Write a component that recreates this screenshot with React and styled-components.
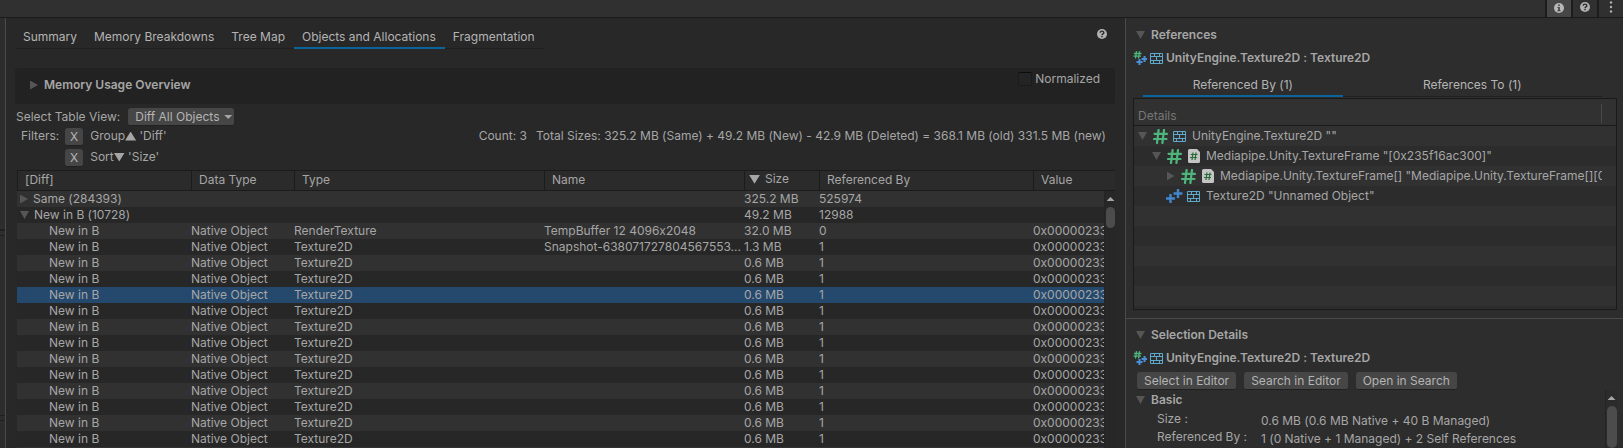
import React from "react";
import styled, { createGlobalStyle } from "styled-components";

const Global = createGlobalStyle`
  * { box-sizing: border-box; }
  body {
    margin: 0;
    background: #2d2d2d;
    color: #a6a6a6;
    font: 12px/16px Inter, "Liberation Sans", sans-serif;
    font-feature-settings: "calt" 0;
  }
  button, select, input { font: inherit; color: inherit; margin: 0; }
  h2, h3, p, dl, dd, ul { margin: 0; padding: 0; font-size: inherit; }
`;

const Window = styled.div`
  display: flex;
  flex-direction: column;
  height: 100vh;
  overflow: hidden;
  white-space: nowrap;
`;

const Toolbar = styled.header`
  display: flex;
  justify-content: flex-end;
  flex: none;
  height: 18px;
  background: #303030;
  border-bottom: 1px solid #1a1a1a;
`;

const ToolButton = styled.button`
  display: flex;
  justify-content: center;
  width: 26px;
  padding: ${(p) => p.$top || 2}px 0 0;
  border: 0;
  border-left: 2px solid #1c1c1c;
  background: ${(p) => (p.$active ? "#464646" : "#303030")};
`;

const Panes = styled.div`
  display: flex;
  flex: 1;
  min-height: 0;
`;

const Rail = styled.aside`
  width: 6px;
  flex: none;
  padding-top: 211px;
  background: #2d2d2d;
  border-right: 1px solid #4a4a4a;
`;

const RailCard = styled.div`
  height: ${(p) => p.$height}px;
  border-top: 1px solid #1f1f1f;
  border-bottom: 1px solid #1f1f1f;
  margin-bottom: 4px;
`;

const Main = styled.main`
  flex: 1;
  min-width: 0;
  padding: 8px 10px 0 9px;
  background: #282828;
  overflow: hidden;
`;

const Side = styled.aside`
  display: flex;
  flex-direction: column;
  width: 498px;
  flex: none;
  border-left: 1px solid #4a4a4a;
  background: #2d2d2d;
`;

const TabBar = styled.div`
  display: flex;
  justify-content: space-between;
  align-items: flex-start;
  padding-right: 8px;
`;

const Tabs = styled.nav`
  display: flex;
`;

const Tab = styled.button`
  height: 23px;
  padding: 0 9px 2px 8px;
  border: 0;
  color: #b4b4b4;
  background: ${(p) =>
    p.$active
      ? "linear-gradient(#0a659c, #0a659c) 0 100% / 100% 2px no-repeat"
      : "linear-gradient(#202020, #202020) 0 100% / 100% 1px no-repeat"};
`;

const SideTab = styled(Tab)`
  flex: ${(p) => p.$grow};
  height: 24px;
  padding: 0;
`;

const IconButton = styled.button`
  display: flex;
  padding: 0;
  margin-top: 3px;
  border: 0;
  background: none;
`;

const Overview = styled.section`
  display: flex;
  justify-content: space-between;
  height: 36px;
  margin-top: 19px;
  padding: 0 15px;
  border-radius: 4px;
  background: #222;
`;

const Heading = styled.h2`
  display: flex;
  align-items: center;
  gap: 6px;
  height: ${(p) => p.$height || 16}px;
  font-weight: 600;
  line-height: 16px;
`;

const Check = styled.label`
  display: flex;
  align-items: center;
  gap: 3px;
  height: 22px;
`;

const CheckBox = styled.input`
  appearance: none;
  width: 14px;
  height: 14px;
  border: 1px solid #1b1b1b;
  border-top-color: #0d0d0d;
  border-radius: 2px;
  background: #242424;
`;

const Triangle = styled.span`
  flex: none;
  width: ${(p) => (p.$open ? 9 : 8)}px;
  height: ${(p) => (p.$open ? 8 : 9)}px;
  background: #565656;
  clip-path: ${(p) =>
    p.$open
      ? "polygon(0 0, 100% 0, 50% 100%)"
      : "polygon(0 0, 100% 50%, 0 100%)"};
`;

const ViewRow = styled.label`
  display: flex;
  align-items: center;
  gap: 8px;
  height: 18px;
  margin-top: 4px;
  padding-left: 1px;
`;

const SelectBox = styled.span`
  display: grid;
  align-items: center;
`;

const Select = styled.select`
  grid-area: 1 / 1;
  appearance: none;
  height: 18px;
  width: 106px;
  padding: 0 0 0 7px;
  border: 0;
  border-bottom: 1px solid #202020;
  border-radius: 3px;
  background: #464646;
  color: #b4b4b4;
  line-height: 16px;
`;

const SelectArrow = styled.span`
  grid-area: 1 / 1;
  justify-self: end;
  width: 8px;
  height: 4px;
  margin-right: 2px;
  background: #a6a6a6;
  clip-path: polygon(0 0, 100% 0, 50% 100%);
  pointer-events: none;
`;

const Filters = styled.div`
  display: flex;
  justify-content: space-between;
  height: 42px;
  margin-top: 2px;
  padding: 0 9px 0 6px;
`;

const FilterGrid = styled.div`
  display: grid;
  grid-template-columns: 44px auto;
  grid-auto-rows: 17px;
  row-gap: 4px;
`;

const FilterItem = styled.div`
  grid-column: 2;
  display: flex;
  align-items: flex-start;
  gap: 7px;
`;

const Order = styled.span`
  display: inline-flex;
  align-items: center;
`;

const FilterMark = styled.span`
  width: 11px;
  height: 9px;
  background: #a6a6a6;
  margin-right: ${(p) => (p.$sort ? 5 : 0)}px;
  clip-path: ${(p) =>
    p.$up ? "polygon(50% 0, 100% 100%, 0 100%)" : "polygon(0 0, 100% 0, 50% 100%)"};
`;

const Button = styled.button`
  height: 18px;
  padding: 0 ${(p) => (p.$small ? 5 : 7)}px;
  border: 0;
  border-bottom: 1px solid #202020;
  border-radius: 3px;
  background: #464646;
  color: #b4b4b4;
  line-height: 16px;
`;

const Totals = styled.p`
  display: flex;
  gap: 9px;
`;

const TableBox = styled.div`
  position: relative;
  margin-left: 2px;
`;

const Table = styled.table`
  width: 100%;
  table-layout: fixed;
  border-collapse: separate;
  border-spacing: 0;
`;

const Th = styled.th`
  height: 21px;
  padding: 0 0 2px ${(p) => (p.$sorted ? 4 : 7)}px;
  border: 1px solid #1b1b1b;
  border-right: 0;
  background: #2b2b2b;
  font-weight: 400;
  text-align: left;
  line-height: 16px;
`;

const Tr = styled.tr`
  height: 16px;
  background: ${(p) => (p.$selected ? "#24496d" : "#272727")};
  &:nth-child(odd) {
    background: ${(p) => (p.$selected ? "#24496d" : "#313131")};
  }
`;

const Td = styled.td`
  height: 16px;
  padding: 0 0 0 ${(p) => p.$indent || 0}px;
  overflow: hidden;
`;

const Toggle = styled.span`
  display: flex;
  align-items: center;
  gap: 5px;
`;

const ScrollBar = styled.div`
  display: flex;
  flex-direction: column;
  align-items: center;
  gap: 6px;
  flex: none;
  width: 12px;
  padding-top: 6px;
  border-left: 1px solid #242424;
  background: #2b2b2b;
`;

const TableScroll = styled(ScrollBar)`
  position: absolute;
  top: 21px;
  right: 0;
  bottom: 0;
  width: 11px;
  padding-left: 1px;
  background: #272727;
`;

const ScrollArrow = styled.span`
  flex: none;
  width: 8px;
  height: 4px;
  background: #a6a6a6;
  clip-path: polygon(50% 0, 100% 100%, 0 100%);
`;

const Thumb = styled.span`
  width: 10px;
  max-width: 100%;
  height: ${(p) => p.$height};
  border-radius: 5px;
  background: #4c4c4c;
`;

const References = styled.section`
  padding: 9px 6px 0 7px;
  height: 301px;
  flex: none;
  border-bottom: 1px solid #4a4a4a;
`;

const Details = styled.section`
  display: flex;
  flex-direction: column;
  flex: 1;
  min-height: 0;
  padding: 8px 6px 0 7px;
`;

const Titled = styled.div`
  padding-left: 3px;
`;

const ObjectName = styled.h3`
  display: flex;
  align-items: center;
  gap: 3px;
  height: 16px;
  margin-top: 7px;
  font-weight: 600;
`;

const SideTabs = styled(Tabs)`
  margin: 7px 15px 0 10px;
`;

const Tree = styled.div`
  height: 212px;
  margin-top: 1px;
  border: 1px solid #1a1a1a;
  overflow: hidden;
`;

const TreeHead = styled.div`
  display: flex;
  align-items: center;
  justify-content: space-between;
  height: 27px;
  padding: 8px 14px 0 4px;
  border-bottom: 1px solid #1a1a1a;
  background: #313131;
  color: #777;
`;

const ColumnGrip = styled.span`
  width: 1px;
  height: 19px;
  margin-top: -6px;
  background: #4a4a4a;
`;

const TreeBody = styled.ul`
  height: 100%;
  list-style: none;
  background: repeating-linear-gradient(#313131 0 20px, #2c2c2c 20px 40px);
`;

const TreeRow = styled.li`
  display: flex;
  align-items: center;
  height: 20px;
  margin-right: 14px;
  padding-left: ${(p) => 4 + 14 * p.$level}px;
  overflow: hidden;
`;

const TreeIcon = styled.span`
  display: flex;
  justify-content: center;
  flex: none;
  width: ${(p) => p.$width}px;
`;

const TreeText = styled.span`
  padding-left: 6px;
`;

const ButtonRow = styled.div`
  display: flex;
  gap: 8px;
  margin: 6px 0 0 4px;
`;

const Properties = styled.div`
  display: flex;
  flex: 1;
  min-height: 0;
  justify-content: space-between;
`;

const PropertyBody = styled.div`
  padding: 2px 0 0 3px;
  overflow: hidden;
`;

const PropertyList = styled.dl`
  display: grid;
  grid-template-columns: 104px auto;
  grid-auto-rows: 18px;
  margin: 3px 0 0 21px;
`;

const Value = styled.dd`
  padding-top: 2px;
`;

const HashIcon = () => (
  <svg width="15" height="15" viewBox="0 0 15 15" aria-hidden="true">
    <path d="M5.600 1 4 14M11 1 9.400 14M1.500 4.800h12.500M1 10h12.500" fill="none" stroke="#4eb57c" strokeWidth="2.200" strokeLinecap="round" />
  </svg>
);

const ScriptIcon = () => (
  <svg width="12" height="14" viewBox="0 0 12 14" aria-hidden="true">
    <path d="M1.500 0H9l3 3v9.500a1.500 1.500 0 0 1-1.500 1.500h-9A1.500 1.500 0 0 1 0 12.500v-11A1.500 1.500 0 0 1 1.500 0Z" fill="#c4c4c4" />
    <path d="M5 3.500 4 11M8 3.500 7 11M2.500 5.500h7M2 8.500h7" fill="none" stroke="#276b37" strokeWidth="1.200" />
  </svg>
);

const TextureIcon = () => (
  <svg width="13" height="11" viewBox="0 0 13 11" aria-hidden="true">
    <path d="M.5.5h12v10H.5zM.5 3.500h12M.5 7.500h12M4.500.5v3M9.500.5v3M3.500 7.500v3M9.500 7.500v3M6.500 3.500v4" fill="none" stroke="#5fa9cc" />
  </svg>
);

const NativeIcon = () => (
  <svg width="18" height="16" viewBox="0 0 18 16" aria-hidden="true">
    <path d="M13 1v9M8.500 5.500h9M5.500 6v9M1 10.500h9" fill="none" stroke="#4186cf" strokeWidth="2.400" />
  </svg>
);

const UnifiedIcon = () => (
  <svg width="14" height="14" viewBox="0 0 14 14" aria-hidden="true">
    <path d="M3.500.2 2.500 7.500M6.500.2 5.500 7.500M1 2.500h7.500M.5 5.200h7.500" fill="none" stroke="#4eb57c" strokeWidth="1.300" />
    <path d="M11.500 5v6M8.500 8h6M6.500 8v6M3.500 11h6" fill="none" stroke="#4a8fd8" strokeWidth="2" />
  </svg>
);

const InfoIcon = () => (
  <svg width="10" height="10" viewBox="0 0 10 10" aria-hidden="true">
    <circle cx="5" cy="5" r="5" fill="#b8b8b8" />
    <path d="M4.200 1.500h1.600V3H4.200zM3.500 4h2.300v3.200h.8v1H3.400v-1h.8V5h-.7z" fill="#404040" />
  </svg>
);

const HelpIcon = () => (
  <svg width="10" height="10" viewBox="0 0 10 10" aria-hidden="true">
    <circle cx="5" cy="5" r="5" fill="#b0b0b0" />
    <path d="M3.200 3.800C3.200 1.600 6.800 1.600 6.800 3.700 6.800 4.900 5 4.900 5 6.200M5 7v1.300" fill="none" stroke="#2c2c2c" strokeWidth="1.400" />
  </svg>
);

const MenuIcon = () => (
  <svg width="4" height="12" viewBox="0 0 4 12" aria-hidden="true">
    <circle cx="2" cy="1.500" r="1.200" fill="#b0b0b0" />
    <circle cx="2" cy="6" r="1.200" fill="#b0b0b0" />
    <circle cx="2" cy="10.500" r="1.200" fill="#b0b0b0" />
  </svg>
);

const TABS = ["Summary", "Memory Breakdowns", "Tree Map", "Objects and Allocations", "Fragmentation"];
const ADDRESS = "0x000002333";

const texture = { type: "Texture2D", name: "", size: "0.6 MB", refs: "1" };
const OBJECTS = [
  { type: "RenderTexture", name: "TempBuffer 12 4096x2048", size: "32.0 MB", refs: "0" },
  { type: "Texture2D", name: "Snapshot-638071727804567553...", size: "1.3 MB", refs: "1" },
  texture,
  texture,
  { ...texture, selected: true },
  ...Array(9).fill(texture),
];

const TREE = [
  { level: 0, open: true, kind: "managed", icon: TextureIcon, text: 'UnityEngine.Texture2D ""' },
  { level: 1, open: true, kind: "managed", icon: ScriptIcon, text: 'Mediapipe.Unity.TextureFrame "[0x235f16ac300]"' },
  { level: 2, open: false, kind: "managed", icon: ScriptIcon, text: 'Mediapipe.Unity.TextureFrame[] "Mediapipe.Unity.TextureFrame[][0' },
  { level: 1, kind: "native", icon: TextureIcon, text: 'Texture2D "Unnamed Object"' },
];

const GroupRow = ({ open, label, size, refs }) => (
  <Tr>
    <Td $indent={3}>
      <Toggle>
        <Triangle $open={open} />
        {label}
      </Toggle>
    </Td>
    <Td /><Td /><Td />
    <Td>{size}</Td>
    <Td>{refs}</Td>
    <Td />
  </Tr>
);

const ObjectTitle = () => (
  <ObjectName>
    <UnifiedIcon />
    <TextureIcon />
    UnityEngine.Texture2D : Texture2D
  </ObjectName>
);

export default function App() {
  return (
    <>
      <Global />
      <Window>
        <Toolbar>
          <ToolButton $active $top={3} aria-label="Details"><InfoIcon /></ToolButton>
          <ToolButton aria-label="Help"><HelpIcon /></ToolButton>
          <ToolButton $top={1} aria-label="More"><MenuIcon /></ToolButton>
        </Toolbar>
        <Panes>
          <Rail>
            <RailCard $height={1} />
            <RailCard $height={181} />
            <RailCard $height={60} />
          </Rail>
          <Main>
            <TabBar>
              <Tabs>
                {TABS.map((t) => (
                  <Tab key={t} $active={t === "Objects and Allocations"}>{t}</Tab>
                ))}
              </Tabs>
              <IconButton aria-label="Open documentation"><HelpIcon /></IconButton>
            </TabBar>
            <Overview>
              <Heading $height={34}>
                <Triangle />
                Memory Usage Overview
              </Heading>
              <Check>
                <CheckBox type="checkbox" />
                Normalized
              </Check>
            </Overview>
            <ViewRow>
              Select Table View:
              <SelectBox>
                <Select defaultValue="diff">
                  <option value="diff">Diff All Objects</option>
                </Select>
                <SelectArrow />
              </SelectBox>
            </ViewRow>
            <Filters>
              <FilterGrid>
                <span>Filters:</span>
                <FilterItem>
                  <Button $small aria-label="Remove grouping">X</Button>
                  <Order>Group<FilterMark $up />&nbsp;'Diff'</Order>
                </FilterItem>
                <FilterItem>
                  <Button $small aria-label="Remove sorting">X</Button>
                  <Order>Sort<FilterMark />&nbsp;'Size'</Order>
                </FilterItem>
              </FilterGrid>
              <Totals>
                <span>Count: 3</span>
                <span>Total Sizes: 325.2 MB (Same) + 49.2 MB (New) - 42.9 MB (Deleted) = 368.1 MB (old) 331.5 MB (new)</span>
              </Totals>
            </Filters>
            <TableBox>
              <Table>
                <colgroup>
                  <col style={{ width: 174 }} />
                  <col style={{ width: 103 }} />
                  <col style={{ width: 250 }} />
                  <col style={{ width: 200 }} />
                  <col style={{ width: 75 }} />
                  <col style={{ width: 214 }} />
                  <col />
                </colgroup>
                <thead>
                  <tr>
                    <Th>[Diff]</Th>
                    <Th>Data Type</Th>
                    <Th>Type</Th>
                    <Th>Name</Th>
                    <Th $sorted>
                      <Order><FilterMark $sort />Size</Order>
                    </Th>
                    <Th>Referenced By</Th>
                    <Th>Value</Th>
                  </tr>
                </thead>
                <tbody>
                  <GroupRow label="Same (284393)" size="325.2 MB" refs="525974" />
                  <GroupRow open label="New in B (10728)" size="49.2 MB" refs="12988" />
                  {OBJECTS.map((o, i) => (
                    <Tr key={i} $selected={o.selected}>
                      <Td $indent={32}>New in B</Td>
                      <Td>Native Object</Td>
                      <Td>{o.type}</Td>
                      <Td>{o.name}</Td>
                      <Td>{o.size}</Td>
                      <Td>{o.refs}</Td>
                      <Td>{ADDRESS}</Td>
                    </Tr>
                  ))}
                  <Tr><Td colSpan={7} /></Tr>
                </tbody>
              </Table>
              <TableScroll>
                <ScrollArrow />
                <Thumb $height="21px" />
              </TableScroll>
            </TableBox>
          </Main>
          <Side>
            <References>
              <Titled>
                <Heading>
                  <Triangle $open />
                  References
                </Heading>
              </Titled>
              <ObjectTitle />
              <SideTabs>
                <SideTab $active $grow="10">Referenced By (1)</SideTab>
                <SideTab $grow="13">References To (1)</SideTab>
              </SideTabs>
              <Tree>
                <TreeHead>
                  Details
                  <ColumnGrip />
                </TreeHead>
                <TreeBody>
                  {TREE.map(({ level, open, kind, icon: Icon, text }) => (
                    <TreeRow key={text} $level={level}>
                      <TreeIcon $width={9}>
                        {kind === "managed" && <Triangle $open={open} />}
                      </TreeIcon>
                      <TreeIcon $width={26}>
                        {kind === "managed" ? <HashIcon /> : <NativeIcon />}
                      </TreeIcon>
                      <TreeIcon $width={13}><Icon /></TreeIcon>
                      <TreeText>{text}</TreeText>
                    </TreeRow>
                  ))}
                </TreeBody>
              </Tree>
            </References>
            <Details>
              <Titled>
                <Heading>
                  <Triangle $open />
                  Selection Details
                </Heading>
              </Titled>
              <ObjectTitle />
              <ButtonRow>
                <Button>Select in Editor</Button>
                <Button>Search in Editor</Button>
                <Button>Open in Search</Button>
              </ButtonRow>
              <Properties>
                <PropertyBody>
                  <Heading>
                    <Triangle $open />
                    Basic
                  </Heading>
                  <PropertyList>
                    <dt>Size :</dt>
                    <Value>0.6 MB (0.6 MB Native + 40 B Managed)</Value>
                    <dt>Referenced By :</dt>
                    <Value>1 (0 Native + 1 Managed) + 2 Self References</Value>
                  </PropertyList>
                </PropertyBody>
                <ScrollBar>
                  <ScrollArrow />
                  <Thumb $height="100%" />
                </ScrollBar>
              </Properties>
            </Details>
          </Side>
        </Panes>
      </Window>
    </>
  );
}
